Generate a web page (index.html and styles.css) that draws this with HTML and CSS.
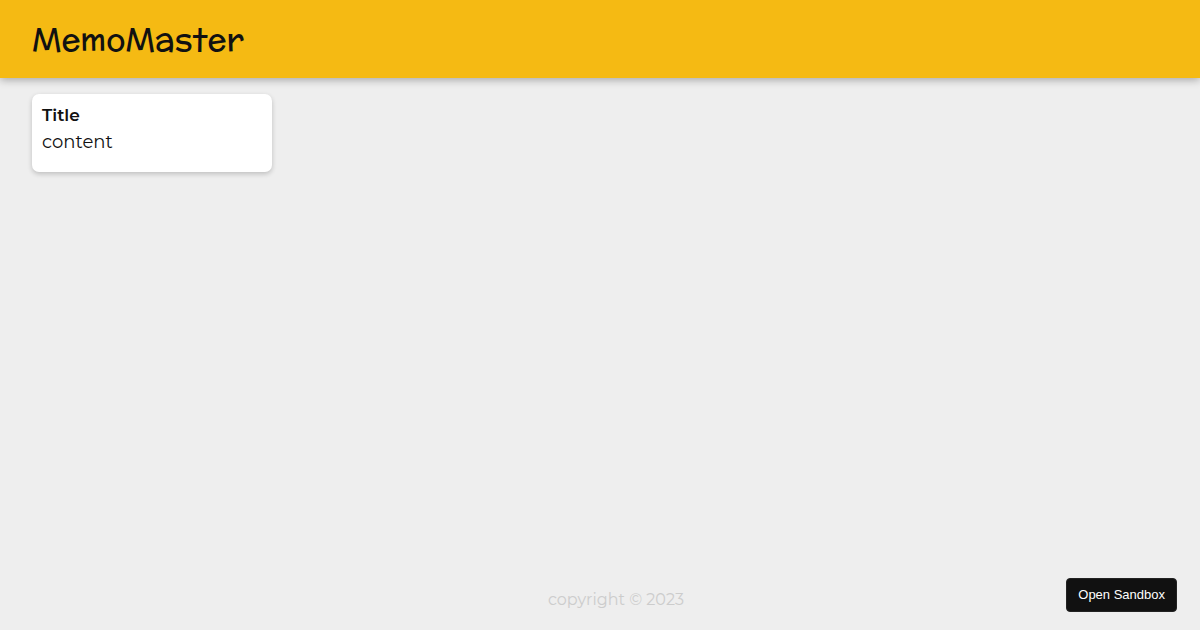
FILE: index.html
```
<!DOCTYPE html>
<html lang="en">
<head>
  <meta charset="UTF-8" />
  <meta name="viewport" content="width=device-width, initial-scale=1" />
  <title>MemoMaster</title>
  <link rel="stylesheet" href="styles.css">
</head>
<body>

<header>
  <h1>MemoMaster</h1>
</header>

<main>
  <article class="note">
    <h2>Title</h2>
    <p>content</p>
  </article>
</main>

<footer>
  <p>copyright © 2023</p>
</footer>

<button type="button" class="sandbox-btn">Open Sandbox</button>

</body>
</html>
```

FILE: styles.css
```
* {
  box-sizing: border-box;
  margin: 0;
  padding: 0;
}
body {
  display: flex;
  flex-direction: column;
  min-height: 100vh;
  font-family: Montserrat, Inter, sans-serif;
  background: #eee;
  color: #111;
}

header {
  padding: 16px 32px;
  background: #f5ba13;
  box-shadow: 0 2px 8px rgb(0 0 0 / 0.3);
}
header h1 {
  font-family: McLaren, "Open Sans", sans-serif;
  font-size: 32px;
  font-weight: 400;
  line-height: 46px;
}

main {
  flex: 1;
  padding: 16px 32px;
}
.note {
  width: 240px;
  padding: 10px 10px 18px;
  background: #fff;
  border-radius: 7px;
  box-shadow: 0 2px 5px rgb(0 0 0 / 0.2);
}
.note h2 {
  margin-bottom: 4px;
  font-size: 17px;
  font-weight: 600;
  line-height: 22px;
}
.note p {
  font-size: 18px;
  line-height: 24px;
}

footer {
  padding: 0 0 20px 32px;
  text-align: center;
  color: #ccc;
}
footer p {
  font-size: 16px;
  line-height: 20px;
}

/* floats over the page corner */
.sandbox-btn {
  position: fixed;
  right: 23px;
  bottom: 18px;
  height: 34px;
  padding: 0 11px 2px;
  font-family: "Liberation Sans", Arial, sans-serif;
  font-size: 13px;
  color: #fff;
  background: #111;
  border: 1px solid #222;
  border-radius: 4px;
  cursor: pointer;
}
```
